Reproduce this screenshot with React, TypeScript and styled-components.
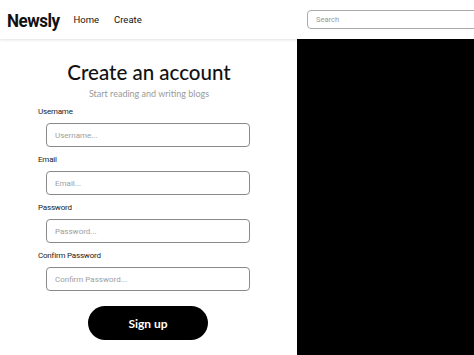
import React from 'react';
import styled, { createGlobalStyle } from 'styled-components';

const GlobalStyle = createGlobalStyle`
  html, body {
    margin: 0;
    padding: 0;
    overflow: hidden;
    background: #fff;
  }
  body {
    font-family: Roboto, "Liberation Sans", sans-serif;
  }
  * { box-sizing: border-box; }
`;

const Page = styled.div`
  width: 474px;
  height: 355px;
  display: flex;
  flex-direction: column;
  overflow: hidden;
`;

const Navbar = styled.nav`
  height: 39px;
  flex-shrink: 0;
  display: flex;
  align-items: center;
  padding-left: 7px;
  box-shadow: 0 1px 3px rgba(0, 0, 0, 0.12);
  position: relative;
  z-index: 1;
  overflow: hidden;
`;

const Logo = styled.div`
  font-family: Roboto, sans-serif;
  font-weight: 700;
  font-size: 17px;
  letter-spacing: -0.5px;
  transform: scaleY(1.1);
  color: #111;
  margin-right: 14px;
`;

const NavLink = styled.a`
  font-size: 9.5px;
  color: #111;
  margin-right: 15px;
  text-decoration: none;
`;

const Search = styled.input`
  margin-left: auto;
  margin-right: -60px;
  flex-shrink: 0;
  width: 227px;
  height: 19px;
  border: 1px solid #aaa;
  border-radius: 4px;
  padding: 0 8px;
  font-family: Roboto, sans-serif;
  font-size: 7.5px;
  outline: none;
  &::placeholder { color: #999; }
`;

const Body = styled.div`
  flex: 1;
  display: flex;
`;

const FormSide = styled.div`
  width: 297px;
  display: flex;
  flex-direction: column;
  padding: 21px 47px 0 38px;
`;

const Dark = styled.div`
  flex: 1;
  background: #000;
`;

const Title = styled.h1`
  margin: 0;
  font-family: Lato, "Noto Sans", sans-serif;
  font-weight: 500;
  font-size: 20.5px;
  text-align: center;
  color: #111;
  padding-left: 10px;
  line-height: 24px;
`;

const Subtitle = styled.p`
  margin: 4px 0 0;
  font-family: Lato, sans-serif;
  font-size: 9px;
  color: #9a9a9a;
  text-align: center;
  padding-left: 10px;
`;

const Field = styled.div`
  display: flex;
  flex-direction: column;
  margin-top: 7px;
`;

const Label = styled.label`
  font-family: Roboto, sans-serif;
  font-size: 8px;
  font-weight: 400;
  color: #222;
  line-height: 12px;
  letter-spacing: -0.2px;
`;

const Input = styled.input`
  margin: 5px 0 0 8px;
  height: 24px;
  width: 204px;
  border: 1px solid #8a8a8a;
  border-radius: 4px;
  padding: 0 8px;
  font-family: Roboto, sans-serif;
  font-size: 8px;
  outline: none;
  &::placeholder { color: #9e9e9e; }
`;

const Button = styled.button`
  align-self: flex-start;
  margin: 15px 0 0 50px;
  width: 120px;
  height: 34px;
  border: none;
  border-radius: 17px;
  background: #000;
  color: #fff;
  font-family: Lato, sans-serif;
  font-weight: 700;
  font-size: 12px;
  cursor: pointer;
`;

const fields = [
  { label: 'Username', placeholder: 'Username...', type: 'text' },
  { label: 'Email', placeholder: 'Email...', type: 'email' },
  { label: 'Password', placeholder: 'Password...', type: 'password' },
  { label: 'Confirm Password', placeholder: 'Confirm Password...', type: 'password' },
];

export default function App() {
  return (
    <Page>
      <GlobalStyle />
      <Navbar>
        <Logo>Newsly</Logo>
        <NavLink>Home</NavLink>
        <NavLink>Create</NavLink>
        <Search placeholder='Search' />
      </Navbar>
      <Body>
        <FormSide>
          <Title>Create an account</Title>
          <Subtitle>Start reading and writing blogs</Subtitle>
          {fields.map(f => (
            <Field key={f.label}>
              <Label>{f.label}</Label>
              <Input type={f.type} placeholder={f.placeholder} />
            </Field>
          ))}
          <Button>Sign up</Button>
        </FormSide>
        <Dark />
      </Body>
    </Page>
  );
}
